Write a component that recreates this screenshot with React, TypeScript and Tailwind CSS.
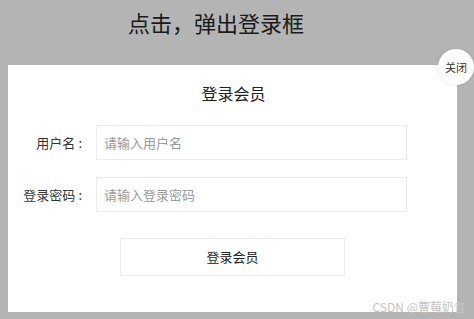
const font = { fontFamily: '"Noto Sans CJK SC", "Noto Sans", sans-serif' };

const Field: React.FC<{ label: string; placeholder: string }> = ({ label, placeholder }) => (
  <div className="flex items-center">
    <label className="w-[76px] pr-[2px] text-right text-[13px] text-[#333]">
      {label}
      <span className="ml-[3px]">:</span>
    </label>
    <div className="ml-[12px] flex h-[35px] w-[311px] items-center border border-[#ececec] px-[7px] text-[13px] text-[#999]">
      {placeholder}
    </div>
  </div>
);

export default function App() {
  return (
    <div className="relative flex h-[319px] w-[474px] flex-col overflow-hidden bg-[#b4b4b4]" style={font}>
      <div className="flex h-[65px] items-start pl-[128px] pt-[6px]">
        <h1 className="text-[22px] leading-[32px] text-[#1a1a1a]">点击，弹出登录框</h1>
      </div>

      <div className="relative ml-[8px] flex h-[247px] w-[449px] flex-col items-center bg-white">
        <button className="absolute -right-[17px] -top-[16px] flex h-[36px] w-[36px] items-center justify-center rounded-full bg-white text-[11px] text-[#333] shadow-[0_0_3px_rgba(0,0,0,0.12)]">
          关闭
        </button>

        <h2 className="mt-[18px] pl-[2px] text-[16px] leading-[20px] text-[#222]">登录会员</h2>

        <div className="mt-[22px] flex w-full flex-col gap-[17px]">
          <Field label="用户名" placeholder="请输入用户名" />
          <Field label="登录密码" placeholder="请输入登录密码" />
        </div>

        <button className="mt-[26px] flex h-[38px] w-[225px] items-center justify-center border border-[#ececec] text-[13px] text-[#222]">
          登录会员
        </button>
      </div>

      <span className="absolute bottom-[5px] right-[8px] text-[12px] leading-[14px] text-[#c4c4c4]">CSDN @曹莓奶昔</span>
    </div>
  );
}
